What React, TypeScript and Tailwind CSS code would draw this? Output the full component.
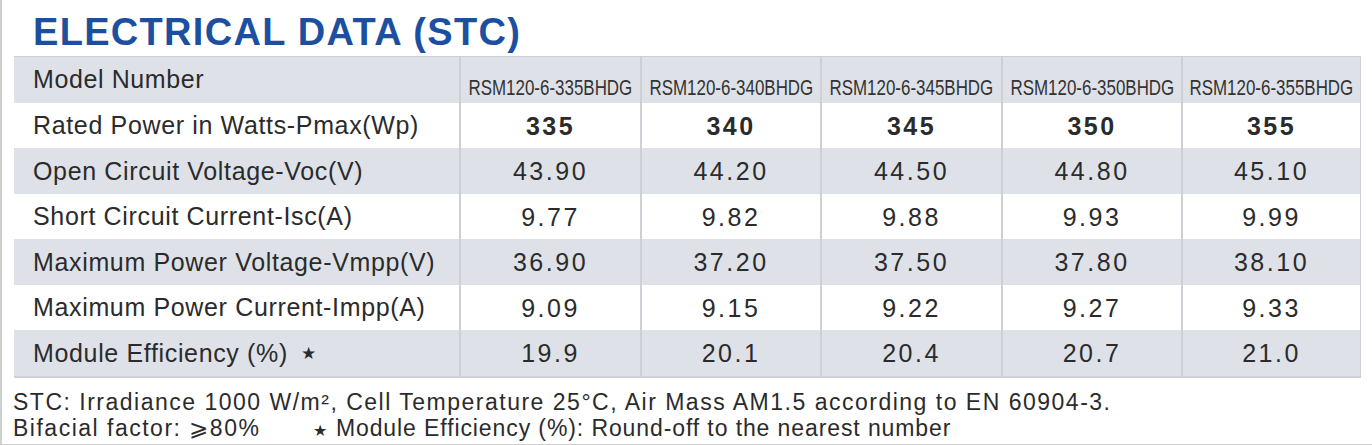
import React from 'react';

const models = ['RSM120-6-335BHDG', 'RSM120-6-340BHDG', 'RSM120-6-345BHDG', 'RSM120-6-350BHDG', 'RSM120-6-355BHDG'];

const rows: { label: string; values: string[]; bold?: boolean; star?: boolean }[] = [
  { label: 'Rated Power in Watts-Pmax(Wp)', values: ['335', '340', '345', '350', '355'], bold: true },
  { label: 'Open Circuit Voltage-Voc(V)', values: ['43.90', '44.20', '44.50', '44.80', '45.10'] },
  { label: 'Short Circuit Current-Isc(A)', values: ['9.77', '9.82', '9.88', '9.93', '9.99'] },
  { label: 'Maximum Power Voltage-Vmpp(V)', values: ['36.90', '37.20', '37.50', '37.80', '38.10'] },
  { label: 'Maximum Power Current-Impp(A)', values: ['9.09', '9.15', '9.22', '9.27', '9.33'] },
  { label: 'Module Efficiency (%)', values: ['19.9', '20.1', '20.4', '20.7', '21.0'], star: true },
];

export default function App() {
  return (
    <div className="h-[445px] w-[1372px] overflow-hidden border-b border-l-2 border-[#cfcfcf] bg-white font-['Liberation_Sans',Arial,sans-serif] text-[#2b2b2b]">
      {/* Title */}
      <h1 className="pl-[31px] pt-[13px] text-[38px] font-bold leading-[38px] tracking-[1.3px] text-[#1c4f9f]">
        ELECTRICAL DATA (STC)
      </h1>

      {/* Table */}
      <div className="ml-[12px] mt-[5px] w-[1347px] border-t border-r border-b-2 border-[#cdd0d5]">
        {/* Header */}
        <div className="grid h-[45.5px] grid-cols-[445px_181px_180px_181px_180px_minmax(0,1fr)] bg-[#dee2e8]">
          <div className="flex items-center pl-[19px] text-[25px] tracking-[0.6px]">Model Number</div>
          {models.map((m) => (
            <div key={m} className="flex min-w-0 items-end justify-center border-l-2 border-[#cdd0d5] pb-[4px]">
              <span className="inline-block scale-x-[0.77] whitespace-nowrap text-[22px] leading-[22px] text-[#333]">
                {m}
              </span>
            </div>
          ))}
        </div>

        {rows.map((r, i) => (
          <div
            key={r.label}
            className={`grid h-[45.5px] grid-cols-[445px_181px_180px_181px_180px_minmax(0,1fr)] ${
              i % 2 === 1 ? 'bg-[#dee2e8]' : 'bg-white'
            }`}
          >
            <div className="flex items-center pl-[19px] pt-[1px] text-[25px] tracking-[0.65px]">
              {r.label}
              {r.star && <span className="ml-[13px] text-[17px]">★</span>}
            </div>
            {r.values.map((v, j) => (
              <div
                key={j}
                className={`flex items-center justify-center border-l-2 border-[#cdd0d5] pt-[2px] text-[25px] tracking-[2.5px] ${
                  r.bold ? 'font-bold' : ''
                }`}
              >
                {v}
              </div>
            ))}
          </div>
        ))}
      </div>

      {/* Notes */}
      <div className="mt-[11px] pl-[11px] text-[23px] leading-[26px] text-[#2b2b2b]">
        <div className="whitespace-nowrap tracking-[1.5px]">
          STC: Irradiance 1000 W/m², Cell Temperature 25°C, Air Mass AM1.5 according to EN 60904-3.
        </div>
        <div className="flex whitespace-nowrap">
          <span className="w-[300px] tracking-[1.5px]">Bifacial factor: ⩾80%</span>
          <span className="tracking-[0.9px]">
            <span className="mr-[8px] text-[16px]">★</span>Module Efficiency (%): Round-off to the nearest number
          </span>
        </div>
      </div>
    </div>
  );
}
